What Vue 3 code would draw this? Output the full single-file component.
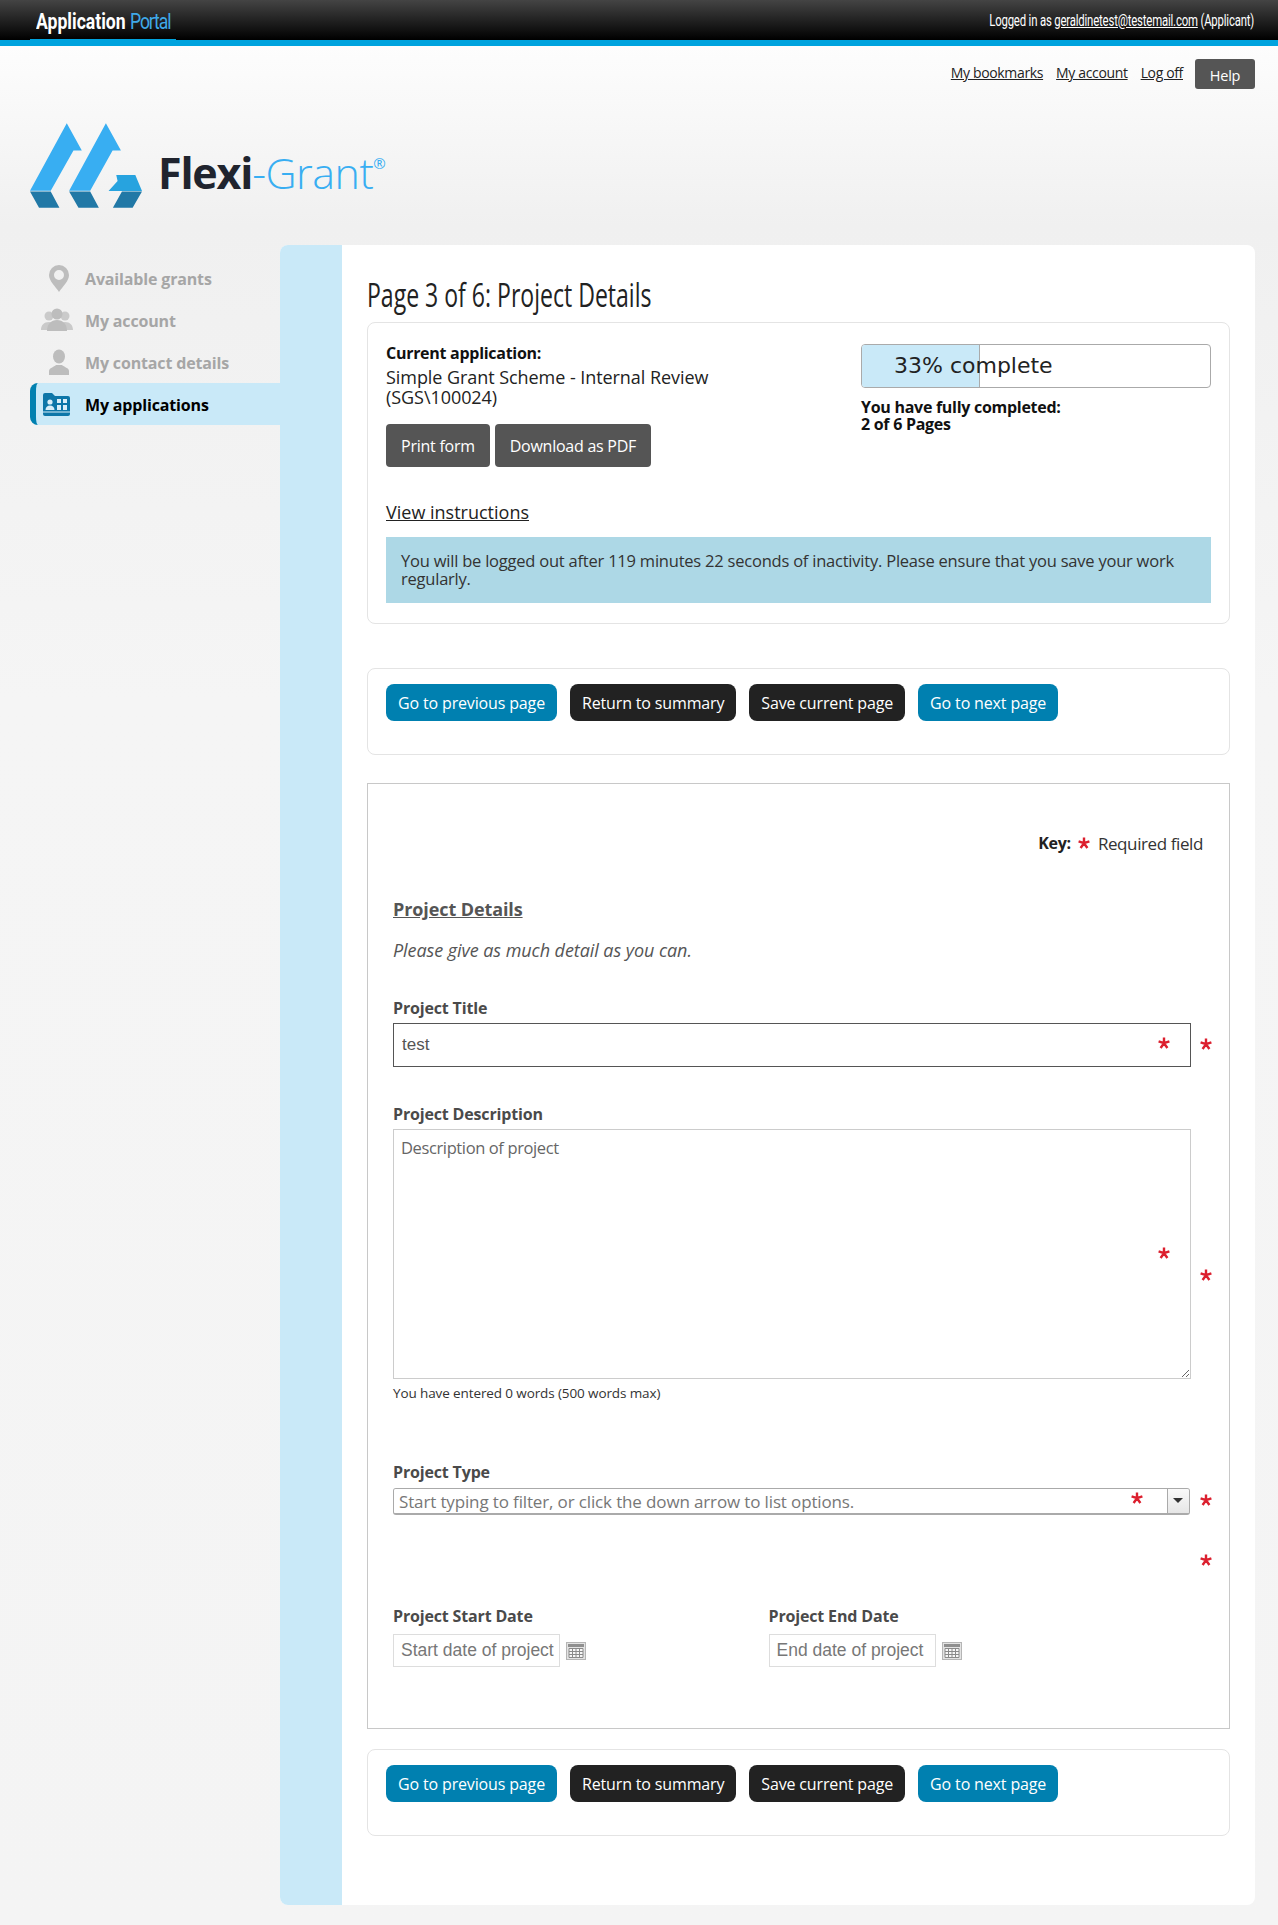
<script setup>
const navItems = [
  { label: 'Available grants', icon: 'pin' },
  { label: 'My account', icon: 'group' },
  { label: 'My contact details', icon: 'person' },
  { label: 'My applications', icon: 'folder', active: true }
]
const actions = [
  { label: 'Go to previous page', kind: 'blue' },
  { label: 'Return to summary', kind: 'dark' },
  { label: 'Save current page', kind: 'dark' },
  { label: 'Go to next page', kind: 'blue' }
]
</script>

<template>
  <div class="page">
    <svg class="defs" width="0" height="0" aria-hidden="true">
      <symbol id="req" viewBox="0 0 12 12">
        <path d="M6 .5v5.700M6 6.200 .6 4.400M6 6.200l5.400-1.800M6 6.200 2.600 11M6 6.200 9.400 11" stroke="#dc1f2e" stroke-width="2.400" fill="none" />
      </symbol>
    </svg>

    <header class="topbar">
      <div class="brand"><div class="brand-text"><b>Application</b> <span>Portal</span></div></div>
      <div class="login">Logged in as <a>geraldinetest@testemail.com</a> (Applicant)</div>
    </header>

    <div class="utility">
      <a>My bookmarks</a>
      <a>My account</a>
      <a>Log off</a>
      <button class="help">Help</button>
    </div>

    <div class="logo">
      <svg class="mark" viewBox="30 40 335 253" width="112" height="85">
        <path fill="#38aef2" d="M140 40 185 122H160L92 242H30ZM257 40 302 122H277L210 242H147Z" />
        <path fill="#2178a6" d="M30 244H92L118 293H57ZM147 244H210L236 293H175ZM305 244H365L337 293H278Z" />
        <path fill="#27a3df" d="M288 195H345L365 243H265L292 213Z" />
      </svg>
      <div class="wordmark"><b>Flexi</b><span>-Grant</span><sup>®</sup></div>
    </div>

    <div class="layout">
      <nav class="side">
        <a v-for="item in navItems" :key="item.label" class="nav" :class="{ active: item.active }">
          <svg class="nav-icon" viewBox="0 0 32 30" width="32" height="30">
            <path v-if="item.icon === 'pin'" transform="translate(2 0)" fill="#bdbdbd" fill-rule="evenodd" d="M16 2a10 10 0 0 0-10 10c0 6 6 11 10 17 4-6 10-11 10-17A10 10 0 0 0 16 2Zm0 5a5 5 0 1 1 0 10 5 5 0 0 1 0-10Z" />
            <g v-else-if="item.icon === 'group'" fill="#cacaca">
              <circle cx="8" cy="11" r="4.500" /><circle cx="24" cy="11" r="4.500" />
              <path d="M0 25c0-5 3-8 8-8s8 3 8 8ZM16 25c0-5 3-8 8-8s8 3 8 8Z" />
              <circle cx="16" cy="9" r="5.500" fill="#bdbdbd" />
              <path fill="#bdbdbd" d="M6 26c0-7 4-11 10-11s10 4 10 11Z" />
            </g>
            <g v-else-if="item.icon === 'person'" fill="#bdbdbd" transform="translate(2 0)">
              <ellipse cx="16" cy="9.500" rx="6" ry="7" />
              <path d="M6 28v-4c0-3 5-4 7-6h6c2 2 7 3 7 6v4Z" />
            </g>
            <g v-else>
              <path fill="#0d76a8" d="M3 6a2 2 0 0 1 2-2h7l3 3h13a2 2 0 0 1 2 2v16a2 2 0 0 1-2 2H5a2 2 0 0 1-2-2Z" />
              <g fill="#d9eef8">
                <circle cx="10" cy="13" r="2.600" />
                <path d="M5.500 21c0-3 2-4.500 4.500-4.500s4.500 1.500 4.500 4.500Z" />
                <path d="M17 10h4v4h-4ZM23 10h4v4h-4ZM17 16h4v5h-4ZM23 16h4v5h-4Z" />
              </g>
              <path fill="#d9eef8" d="M3 22.500h27v1H3Z" />
            </g>
          </svg>
          <span class="nav-label">{{ item.label }}</span>
        </a>
      </nav>

      <main class="panel">
        <div class="strip"></div>
        <div class="content">
          <h1><span>Page 3 of 6: Project Details</span></h1>

          <section class="card summary">
            <div class="summary-top">
              <div class="summary-left">
                <div class="strong">Current application:</div>
                <div class="app-name">Simple Grant Scheme - Internal Review<br />(SGS\100024)</div>
                <div class="tools">
                  <button class="tool">Print form</button>
                  <button class="tool">Download as PDF</button>
                </div>
              </div>
              <div class="summary-right">
                <div class="progress">
                  <div class="bar" :style="{ width: '34%' }"></div>
                  <span>33% complete</span>
                </div>
                <div class="strong done">You have fully completed:<br />2 of 6 Pages</div>
              </div>
            </div>
            <a class="instructions">View instructions</a>
            <div class="alert">You will be logged out after 119 minutes 22 seconds of inactivity. Please ensure that you save your work regularly.</div>
          </section>

          <section class="card actions">
            <button v-for="a in actions" :key="a.label" class="act" :class="a.kind">{{ a.label }}</button>
          </section>

          <section class="form">
            <div class="key"><b>Key:</b><svg class="star"><use href="#req" /></svg><span>Required field</span></div>
            <h2>Project Details</h2>
            <p class="hint">Please give as much detail as you can.</p>

            <label class="lbl first">Project Title</label>
            <div class="row">
              <div class="field">
                <input class="title-input" value="test" readonly />
                <svg class="star inner title-star"><use href="#req" /></svg>
              </div>
              <svg class="star outer"><use href="#req" /></svg>
            </div>

            <label class="lbl desc-lbl">Project Description</label>
            <div class="row top">
              <div class="field">
                <textarea class="desc" placeholder="Description of project"></textarea>
                <svg class="star inner desc-star"><use href="#req" /></svg>
              </div>
              <svg class="star outer desc-outer"><use href="#req" /></svg>
            </div>
            <div class="count">You have entered 0 words (500 words max)</div>

            <label class="lbl type-lbl">Project Type</label>
            <div class="row">
              <div class="combo">
                <input placeholder="Start typing to filter, or click the down arrow to list options." readonly />
                <svg class="star combo-star"><use href="#req" /></svg>
                <button class="drop" aria-label="Open list"><i></i></button>
              </div>
              <svg class="star outer"><use href="#req" /></svg>
            </div>
            <div class="lone"><svg class="star"><use href="#req" /></svg></div>

            <div class="dates">
              <div class="date">
                <label class="lbl">Project Start Date</label>
                <div class="date-row">
                  <input placeholder="Start date of project" readonly />
                  <svg class="cal" viewBox="0 0 20 18" width="20" height="18">
                    <rect x=".5" y=".5" width="19" height="17" fill="#e3e3e3" stroke="#b5b5b5" />
                    <rect x="2" y="2" width="16" height="3" fill="#8f8f8f" />
                    <path d="M3 6.500h14v9H3ZM3 9.500h14M3 12.500h14M6.500 6.500v9M10 6.500v9M13.500 6.500v9" fill="#f7f7f7" stroke="#8a8a8a" />
                  </svg>
                </div>
              </div>
              <div class="date">
                <label class="lbl">Project End Date</label>
                <div class="date-row">
                  <input placeholder="End date of project" readonly />
                  <svg class="cal" viewBox="0 0 20 18" width="20" height="18">
                    <rect x=".5" y=".5" width="19" height="17" fill="#e3e3e3" stroke="#b5b5b5" />
                    <rect x="2" y="2" width="16" height="3" fill="#8f8f8f" />
                    <path d="M3 6.500h14v9H3ZM3 9.500h14M3 12.500h14M6.500 6.500v9M10 6.500v9M13.500 6.500v9" fill="#f7f7f7" stroke="#8a8a8a" />
                  </svg>
                </div>
              </div>
            </div>
          </section>

          <section class="card actions bottom">
            <button v-for="a in actions" :key="a.label" class="act" :class="a.kind">{{ a.label }}</button>
          </section>
        </div>
      </main>
    </div>
  </div>
</template>

<style>
html, body { margin: 0; background: #f4f4f4; }
</style>

<style scoped>
.page {
  height: 1925px;
  overflow: hidden;
  font-family: "Open Sans", "Noto Sans", sans-serif;
  color: #222;
  background: linear-gradient(#fdfdfd 46px, #f0f0f0 225px, #f5f5f5 700px, #f4f4f4);
}
.defs { position: absolute; }
a { text-decoration: none; }
button { font-family: inherit; border: 0; cursor: pointer; }

.topbar {
  box-sizing: border-box;
  height: 46px;
  border-bottom: 6px solid #00a3de;
  background: linear-gradient(#444, #000);
  display: flex;
  justify-content: space-between;
  padding: 0 24px 0 30px;
  font-family: Roboto, sans-serif;
}
.brand {
  height: 40px;
  box-sizing: border-box;
  border-bottom: 1px solid #00a3de;
  padding: 8px 6px 0;
  width: 146px;
}
.brand-text {
  font-size: 22px;
  line-height: 28px;
  color: #fff;
  white-space: nowrap;
  transform: scaleX(.8);
  transform-origin: left center;
}
.brand span { color: #3fa9e8; letter-spacing: -1.4px; }
.login {
  color: #fff;
  font-size: 16px;
  line-height: 42px;
  letter-spacing: -.25px;
  white-space: nowrap;
  transform: scaleX(.71);
  transform-origin: right center;
}
.login a { text-decoration: underline; }

.utility {
  display: flex;
  justify-content: flex-end;
  align-items: flex-start;
  gap: 13px;
  padding: 13px 23px 0 0;
  height: 46px;
  box-sizing: border-box;
  font-size: 14px;
  letter-spacing: -.35px;
}
.utility a { text-decoration: underline; line-height: 20px; color: #222; margin-top: 4px; }
.utility .help {
  width: 60px;
  height: 30px;
  margin-left: -1px;
  padding-top: 3px;
  background: #555;
  color: #fff;
  font-size: 14.500px;
  border-radius: 3px;
  letter-spacing: -.2px;
}

.logo {
  display: flex;
  align-items: flex-start;
  height: 153px;
  box-sizing: border-box;
  padding: 31px 0 0 30px;
}
.wordmark {
  margin: 20px 0 0 16px;
  font-size: 43px;
  line-height: 60px;
  letter-spacing: -.5px;
  color: #38aef2;
  font-weight: 300;
  white-space: nowrap;
}
.wordmark b { color: #20242e; font-weight: 700; letter-spacing: -1.2px; }
.wordmark sup { font-size: 15px; line-height: 0; vertical-align: 20px; letter-spacing: 0; font-weight: 400; }

.layout { display: flex; align-items: flex-start; }
.side { width: 280px; padding: 12px 0 0 30px; box-sizing: border-box; }
.nav {
  display: flex;
  align-items: center;
  height: 42px;
  padding-left: 6px;
  font-size: 16px;
  font-weight: 700;
  letter-spacing: -.16px;
  color: #a6a6a6;
  box-sizing: border-box;
}
.nav-icon { margin: 0 12px 0 5px; flex: none; }
.nav-label { margin-top: 1px; }
.nav.active {
  background: #c9e9f8;
  color: #000;
  border-left: 6px solid #0080b0;
  border-radius: 8px 0 0 8px;
  padding-left: 0;
}
.nav.active .nav-icon { margin: 0 13px 0 4px; }

.panel {
  display: flex;
  width: 975px;
  height: 1660px;
  border-radius: 8px;
  overflow: hidden;
  background: #fff;
}
.strip { width: 62px; flex: none; background: #c9e9f8; }
.content { width: 863px; margin-left: 25px; }

h1 {
  margin: 0;
  padding-top: 30px;
  height: 47px;
  font-size: 32px;
  line-height: 40px;
  font-weight: 400;
  color: #222;
}
h1 span {
  display: inline-block;
  white-space: nowrap;
  transform: scaleX(.72);
  transform-origin: left center;
}
.card {
  border: 1px solid #e4e4e4;
  border-radius: 8px;
  box-sizing: border-box;
  background: #fff;
}
.summary { height: 302px; padding: 18px 18px 0; }
.summary-top { display: flex; justify-content: space-between; height: 140px; }
.strong { font-weight: 700; font-size: 16px; letter-spacing: -.28px; color: #111; }
.app-name { font-size: 18px; line-height: 20px; letter-spacing: -.06px; color: #222; margin-top: 4px; }
.summary-left > .strong { line-height: 20px; margin-top: 2px; }
.tools { display: flex; gap: 5px; margin-top: 17px; }
.tool {
  height: 43px;
  padding: 0 15px;
  background: #555;
  color: #fff;
  border-radius: 4px;
  font-size: 16px;
  letter-spacing: -.25px;
}
.summary-right { width: 350px; padding-top: 3px; }
.progress {
  position: relative;
  box-sizing: border-box;
  height: 44px;
  border: 1px solid #aaa;
  border-radius: 4px;
  overflow: hidden;
  font-family: "DejaVu Sans", sans-serif;
  font-size: 22px;
  line-height: 42px;
  color: #222;
}
.bar { position: absolute; inset: 0 auto 0 0; background: #c9e9f8; border-right: 1px solid #aaa; box-sizing: border-box; }
.progress span { position: absolute; left: 32px; top: 0; white-space: nowrap; }
.done { line-height: 17px; margin-top: 11px; }
.instructions {
  display: block;
  font-size: 18px;
  line-height: 24px;
  color: #222;
  text-decoration: underline;
  margin-top: 19px;
  width: max-content;
}
.alert {
  margin-top: 13px;
  height: 66px;
  box-sizing: border-box;
  padding: 15px 15px 0;
  background: #add8e6;
  font-size: 16.500px;
  line-height: 18px;
  letter-spacing: -.22px;
  color: #333;
}

.actions {
  display: flex;
  gap: 13px;
  height: 87px;
  margin-top: 44px;
  padding: 15px 18px 0;
}
.actions.bottom { margin-top: 20px; }
.act {
  height: 37px;
  padding: 0 12px;
  border-radius: 8px;
  color: #fff;
  font-size: 16px;
  letter-spacing: -.15px;
  white-space: nowrap;
}
.act.blue { background: #0080b0; }
.act.dark { background: #222; }

.form {
  box-sizing: border-box;
  height: 946px;
  margin-top: 28px;
  border: 1px solid #c8c8c8;
  padding: 0 0 0 25px;
  color: #555;
}
.key {
  display: flex;
  align-items: center;
  justify-content: flex-end;
  height: 20px;
  padding-right: 26px;
  margin-top: 49px;
  font-size: 17px;
  letter-spacing: -.4px;
  color: #333;
}
.key b { color: #222; font-size: 16px; letter-spacing: -.25px; margin-right: 7px; }
.key span { margin-left: 8px; }
.star { width: 12px; height: 12px; flex: none; display: block; }
h2 {
  margin: 44px 0 0;
  font-size: 18px;
  line-height: 24px;
  font-weight: 700;
  letter-spacing: -.1px;
  text-decoration: underline;
  color: #555;
}
.hint {
  margin: 17px 0 0;
  font-size: 18px;
  line-height: 24px;
  font-style: italic;
  letter-spacing: -.07px;
  color: #555;
}
.lbl {
  display: block;
  font-size: 16px;
  font-weight: 700;
  line-height: 20px;
  letter-spacing: -.16px;
  color: #4a4a4a;
}
.lbl.first { margin-top: 36px; }
.row { display: flex; align-items: center; width: 819px; gap: 9px; }
.row.top { align-items: flex-start; }
.field { position: relative; width: 798px; flex: none; }
.title-input {
  display: block;
  box-sizing: border-box;
  width: 798px;
  height: 44px;
  margin-top: 5px;
  padding: 0 7px 1px 8px;
  border: 1px solid #555;
  font-family: "Liberation Sans", sans-serif;
  font-size: 17px;
  color: #555;
  outline: 0;
}
.inner { position: absolute; left: 765px; }
.title-star { top: 19px; }
.row .outer { margin-top: 3px; }
.desc-lbl { margin-top: 37px; }
.desc {
  display: block;
  box-sizing: border-box;
  width: 798px;
  height: 250px;
  margin: 5px 0 0;
  padding: 8px 7px;
  border: 1px solid #ccc;
  font-family: inherit;
  font-size: 16.500px;
  letter-spacing: -.38px;
  line-height: 20px;
  outline: 0;
}
.desc::placeholder { color: #666; opacity: 1; }
.desc-star { top: 123px; }
.desc-outer { margin-top: 145px !important; }
.count {
  margin-top: 4px;
  font-size: 13.500px;
  line-height: 20px;
  letter-spacing: -.11px;
  color: #333;
}
.type-lbl { margin-top: 59px; }
.combo {
  position: relative;
  display: flex;
  box-sizing: border-box;
  width: 797px;
  height: 27px;
  margin: 6px 1px 0 0;
  border: 1px solid #aaa;
  border-bottom-width: 2px;
  border-radius: 3px;
  overflow: hidden;
}
.combo input {
  flex: 1;
  min-width: 0;
  border: 0;
  padding: 0 5px;
  font-family: inherit;
  font-size: 17px;
  letter-spacing: -.14px;
  outline: 0;
  background: #fff;
}
.combo input::placeholder { color: #777; opacity: 1; }
.combo-star { position: absolute; left: 737px; top: 3px; }
.drop {
  position: relative;
  width: 22px;
  flex: none;
  border-left: 1px solid #aaa;
  background: linear-gradient(#fafafa, #e6e6e6);
  padding: 0;
}
.drop i {
  position: absolute;
  left: 5px;
  top: 9px;
  border: 5px solid transparent;
  border-top: 5px solid #333;
  border-bottom: 0;
}
.lone { width: 819px; display: flex; justify-content: flex-end; margin-top: 39px; }
.dates { display: flex; margin-top: 40px; }
.date { width: 375.500px; }
.date-row { display: flex; align-items: center; margin-top: 8px; }
.date-row input {
  box-sizing: border-box;
  width: 167px;
  height: 33px;
  padding: 0 0 0 7px;
  border: 1px solid #ddd;
  font-family: "Liberation Sans", sans-serif;
  font-size: 17.500px;
  outline: 0;
}
.date-row input::placeholder { color: #777; opacity: 1; }
.cal { margin-left: 6px; flex: none; }
</style>
